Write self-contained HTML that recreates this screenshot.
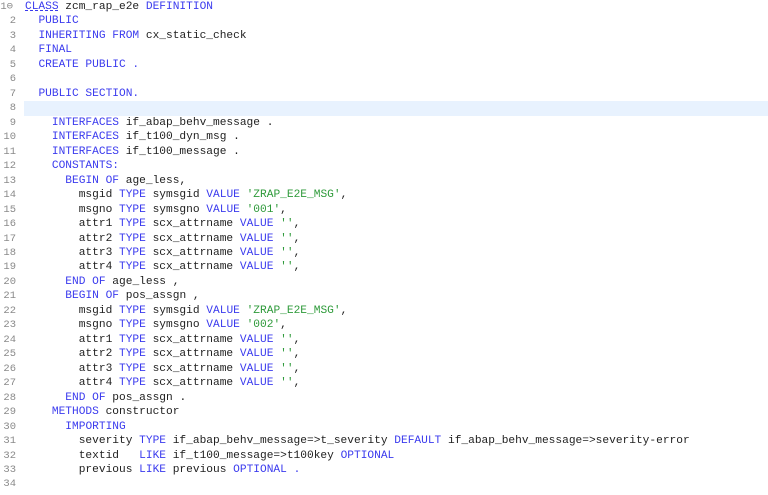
<!DOCTYPE html>
<html><head><meta charset="utf-8"><style>
html,body{margin:0;padding:0;background:#fff;width:768px;height:495px;overflow:hidden}
.w{position:relative;top:0px}
.l{height:14.48px;line-height:14.48px;font-family:"Liberation Mono",monospace;font-size:11.2px;white-space:pre;color:#1e1e1e;position:relative}
.n{position:absolute;left:0;width:16px;text-align:right;color:#8a8a8a;font-size:10.5px}
.c{position:absolute;left:25px}
.k{color:#3b3bee}
.s{color:#2e9a3a}
.hl{position:absolute;left:24px;right:0;top:0;bottom:0;background:#e8f2fe}
.u{text-decoration:underline dashed #3b3bee}
</style></head><body><div class="w">
<div class="l"><span class="n" style="left:-3px">1⊖</span><span class="c"><span class="k u">CLASS</span> zcm_rap_e2e <span class="k">DEFINITION</span></span></div>
<div class="l"><span class="n">2</span><span class="c">  <span class="k">PUBLIC</span></span></div>
<div class="l"><span class="n">3</span><span class="c">  <span class="k">INHERITING FROM</span> cx_static_check</span></div>
<div class="l"><span class="n">4</span><span class="c">  <span class="k">FINAL</span></span></div>
<div class="l"><span class="n">5</span><span class="c">  <span class="k">CREATE PUBLIC .</span></span></div>
<div class="l"><span class="n">6</span></div>
<div class="l"><span class="n">7</span><span class="c">  <span class="k">PUBLIC SECTION.</span></span></div>
<div class="l"><span class="hl"></span><span class="n">8</span></div>
<div class="l"><span class="n">9</span><span class="c">    <span class="k">INTERFACES</span> if_abap_behv_message .</span></div>
<div class="l"><span class="n">10</span><span class="c">    <span class="k">INTERFACES</span> if_t100_dyn_msg .</span></div>
<div class="l"><span class="n">11</span><span class="c">    <span class="k">INTERFACES</span> if_t100_message .</span></div>
<div class="l"><span class="n">12</span><span class="c">    <span class="k">CONSTANTS:</span></span></div>
<div class="l"><span class="n">13</span><span class="c">      <span class="k">BEGIN OF</span> age_less,</span></div>
<div class="l"><span class="n">14</span><span class="c">        msgid <span class="k">TYPE</span> symsgid <span class="k">VALUE</span> <span class="s">'ZRAP_E2E_MSG'</span>,</span></div>
<div class="l"><span class="n">15</span><span class="c">        msgno <span class="k">TYPE</span> symsgno <span class="k">VALUE</span> <span class="s">'001'</span>,</span></div>
<div class="l"><span class="n">16</span><span class="c">        attr1 <span class="k">TYPE</span> scx_attrname <span class="k">VALUE</span> <span class="s">''</span>,</span></div>
<div class="l"><span class="n">17</span><span class="c">        attr2 <span class="k">TYPE</span> scx_attrname <span class="k">VALUE</span> <span class="s">''</span>,</span></div>
<div class="l"><span class="n">18</span><span class="c">        attr3 <span class="k">TYPE</span> scx_attrname <span class="k">VALUE</span> <span class="s">''</span>,</span></div>
<div class="l"><span class="n">19</span><span class="c">        attr4 <span class="k">TYPE</span> scx_attrname <span class="k">VALUE</span> <span class="s">''</span>,</span></div>
<div class="l"><span class="n">20</span><span class="c">      <span class="k">END OF</span> age_less ,</span></div>
<div class="l"><span class="n">21</span><span class="c">      <span class="k">BEGIN OF</span> pos_assgn ,</span></div>
<div class="l"><span class="n">22</span><span class="c">        msgid <span class="k">TYPE</span> symsgid <span class="k">VALUE</span> <span class="s">'ZRAP_E2E_MSG'</span>,</span></div>
<div class="l"><span class="n">23</span><span class="c">        msgno <span class="k">TYPE</span> symsgno <span class="k">VALUE</span> <span class="s">'002'</span>,</span></div>
<div class="l"><span class="n">24</span><span class="c">        attr1 <span class="k">TYPE</span> scx_attrname <span class="k">VALUE</span> <span class="s">''</span>,</span></div>
<div class="l"><span class="n">25</span><span class="c">        attr2 <span class="k">TYPE</span> scx_attrname <span class="k">VALUE</span> <span class="s">''</span>,</span></div>
<div class="l"><span class="n">26</span><span class="c">        attr3 <span class="k">TYPE</span> scx_attrname <span class="k">VALUE</span> <span class="s">''</span>,</span></div>
<div class="l"><span class="n">27</span><span class="c">        attr4 <span class="k">TYPE</span> scx_attrname <span class="k">VALUE</span> <span class="s">''</span>,</span></div>
<div class="l"><span class="n">28</span><span class="c">      <span class="k">END OF</span> pos_assgn .</span></div>
<div class="l"><span class="n">29</span><span class="c">    <span class="k">METHODS</span> constructor</span></div>
<div class="l"><span class="n">30</span><span class="c">      <span class="k">IMPORTING</span></span></div>
<div class="l"><span class="n">31</span><span class="c">        severity <span class="k">TYPE</span> if_abap_behv_message=&gt;t_severity <span class="k">DEFAULT</span> if_abap_behv_message=&gt;severity-error</span></div>
<div class="l"><span class="n">32</span><span class="c">        textid   <span class="k">LIKE</span> if_t100_message=&gt;t100key <span class="k">OPTIONAL</span></span></div>
<div class="l"><span class="n">33</span><span class="c">        previous <span class="k">LIKE</span> previous <span class="k">OPTIONAL .</span></span></div>
<div class="l"><span class="n">34</span></div>
</div></body></html>
